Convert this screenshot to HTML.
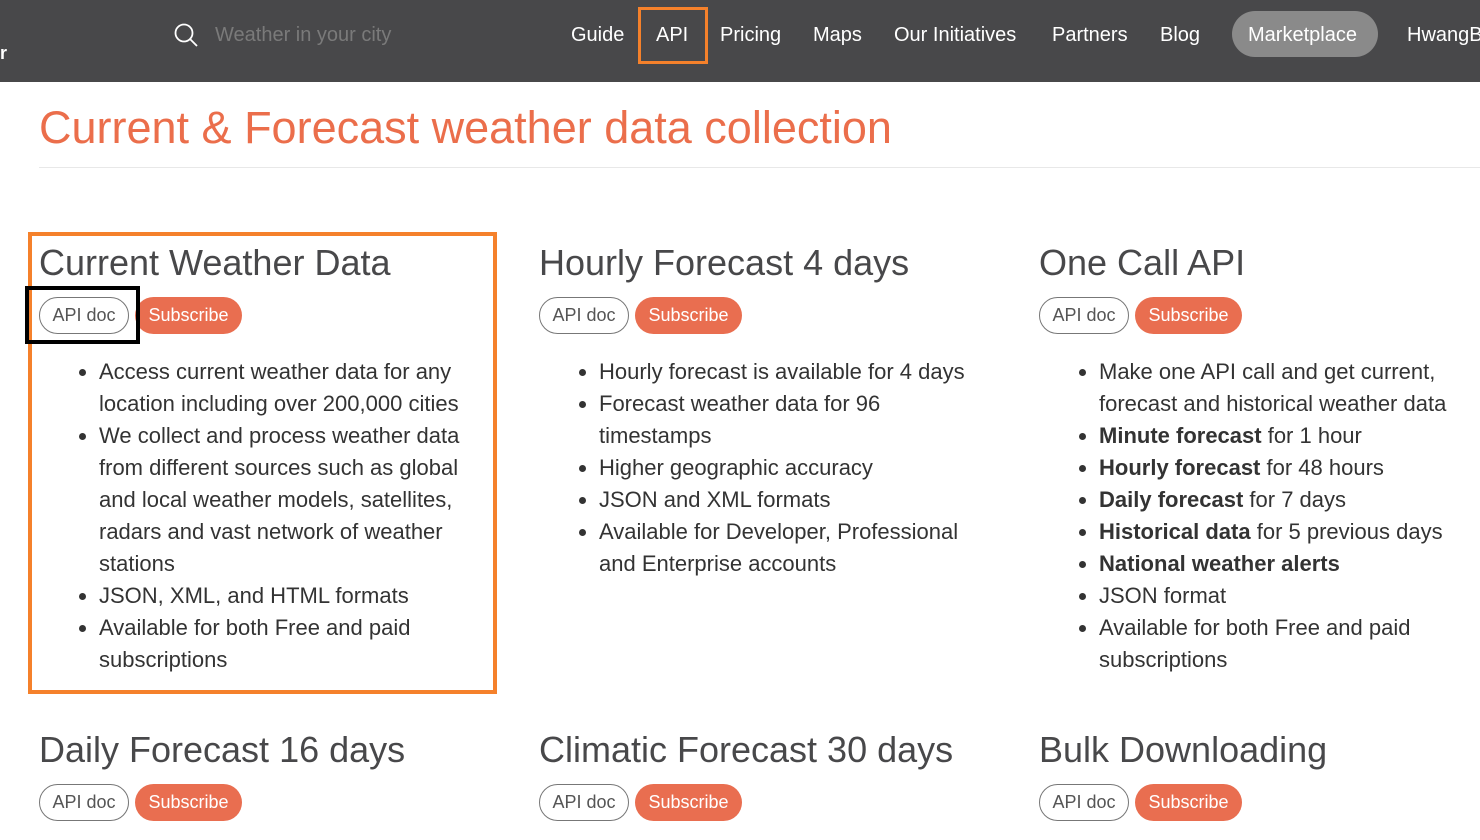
<!DOCTYPE html>
<html><head><meta charset="utf-8"><style>
*{margin:0;padding:0;box-sizing:border-box}
body{width:1480px;height:840px;overflow:hidden;background:#fff;font-family:"Liberation Sans",Arial,sans-serif;color:#48484a;position:relative}
.hdr{position:absolute;left:0;top:0;width:1480px;height:82px;background:#48484a}
.n{position:absolute;top:22px;color:#fff;font-size:20px;line-height:26px;white-space:nowrap}
.mp{position:absolute;left:1232px;top:11px;width:146px;height:46px;border-radius:23px;background:#8a8a8a}
.apibox{position:absolute;left:638px;top:7px;width:70px;height:57px;border:3px solid #f5812b}
h1{position:absolute;left:39px;top:102px;font-size:45px;font-weight:normal;color:#eb6e4b;white-space:nowrap}
.hr{position:absolute;left:39px;top:167px;width:1441px;height:1px;background:#e8e8e8}
.col{position:absolute;width:450px}
.col h2{font-size:36px;font-weight:normal;line-height:40px;white-space:nowrap;color:#48484a}
.btns{margin-top:14px;height:37px;position:relative}
.b1{position:absolute;left:0;top:0;width:90px;height:37px;border:1px solid #777;border-radius:19px;font-size:18px;line-height:35px;text-align:center;color:#555}
.b2{position:absolute;left:96px;top:0;width:107px;height:37px;border-radius:19px;background:#e96e50;color:#fff;font-size:18px;line-height:37px;text-align:center}
ul{margin-top:22px;padding-left:60px;font-size:22px;line-height:32px;color:#333}
b{font-weight:bold;color:#333}
</style></head><body>
<div class="hdr">
<div class="n" style="left:0;top:40px;font-weight:bold;font-size:18px">r</div>
<svg style="position:absolute;left:173px;top:22px" width="26" height="26" viewBox="0 0 26 26"><circle cx="11" cy="11" r="8.5" fill="none" stroke="#fff" stroke-width="1.8"/><line x1="17" y1="17" x2="24" y2="24" stroke="#fff" stroke-width="1.8"/></svg>
<div class="n" style="left:215px;color:#7a7a7a">Weather in your city</div>
<div class="n" style="left:571px">Guide</div>
<div class="apibox"></div>
<div class="n" style="left:656px">API</div>
<div class="n" style="left:720px">Pricing</div>
<div class="n" style="left:813px">Maps</div>
<div class="n" style="left:894px">Our Initiatives</div>
<div class="n" style="left:1052px">Partners</div>
<div class="n" style="left:1160px">Blog</div>
<div class="mp"></div>
<div class="n" style="left:1248px">Marketplace</div>
<div class="n" style="left:1407px">HwangB</div>
</div>
<h1>Current &amp; Forecast weather data collection</h1>
<div class="hr"></div>

<div class="col" style="left:39px;top:243px"><h2>Current Weather Data</h2><div class="btns"><div class="b1">API doc</div><div class="b2">Subscribe</div></div>
<ul><li>Access current weather data for any location including over 200,000 cities</li><li>We collect and process weather data from different sources such as global and local weather models, satellites, radars and vast network of weather stations</li><li>JSON, XML, and HTML formats</li><li>Available for both Free and paid subscriptions</li></ul></div>
<div class="col" style="left:539px;top:243px"><h2>Hourly Forecast 4 days</h2><div class="btns"><div class="b1">API doc</div><div class="b2">Subscribe</div></div>
<ul><li>Hourly forecast is available for 4 days</li><li>Forecast weather data for 96 timestamps</li><li>Higher geographic accuracy</li><li>JSON and XML formats</li><li>Available for Developer, Professional and Enterprise accounts</li></ul></div>
<div class="col" style="left:1039px;top:243px;width:430px"><h2>One Call API</h2><div class="btns"><div class="b1">API doc</div><div class="b2">Subscribe</div></div>
<ul><li>Make one API call and get current, forecast and historical weather data</li><li><b>Minute forecast</b> for 1 hour</li><li><b>Hourly forecast</b> for 48 hours</li><li><b>Daily forecast</b> for 7 days</li><li><b>Historical data</b> for 5 previous days</li><li><b>National weather alerts</b></li><li>JSON format</li><li>Available for both Free and paid subscriptions</li></ul></div>

<div class="col" style="left:39px;top:730px"><h2>Daily Forecast 16 days</h2><div class="btns"><div class="b1">API doc</div><div class="b2">Subscribe</div></div></div>
<div class="col" style="left:539px;top:730px"><h2>Climatic Forecast 30 days</h2><div class="btns"><div class="b1">API doc</div><div class="b2">Subscribe</div></div></div>
<div class="col" style="left:1039px;top:730px"><h2>Bulk Downloading</h2><div class="btns"><div class="b1">API doc</div><div class="b2">Subscribe</div></div></div>

<div style="position:absolute;left:28px;top:232px;width:469px;height:462px;border:4px solid #f5812b"></div>
<div style="position:absolute;left:25px;top:286px;width:115px;height:58px;border:4px solid #000"></div>
</body></html>
